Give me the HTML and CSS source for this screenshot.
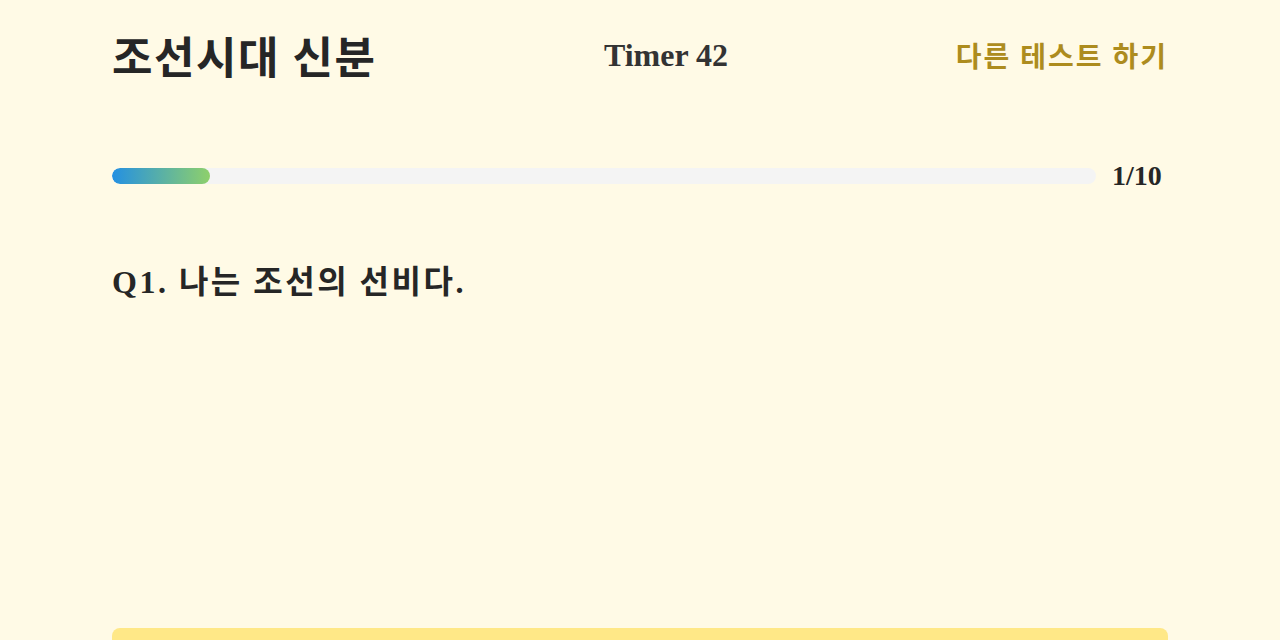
FILE: index.html
```html
<!DOCTYPE html>
<html lang="ko">
<head>
<meta charset="utf-8">
<link rel="stylesheet" href="styles.css">
</head>
<body>
<div class="page">
  <header class="header">
    <h1 class="title">조선시대 신분</h1>
    <div class="timer">Timer 42</div>
    <a class="other" href="#">다른 테스트 하기</a>
  </header>
  <div class="progress-row">
    <div class="track"><div class="fill" style="width:10%"></div></div>
    <div class="count">1/10</div>
  </div>
  <h2 class="question">Q1. 나는 조선의 선비다.</h2>
  <div class="answer"></div>
</div>
</body>
</html>
```
FILE: styles.css
```css
html, body { margin: 0; padding: 0; }
body {
  background: #fffae6;
  font-family: "Liberation Serif", "Noto Sans CJK KR", serif;
  color: #262626;
  overflow: hidden;
}
.page {
  width: 1056px;
  margin: 0 auto;
}
.header {
  height: 110px;
  display: flex;
  justify-content: space-between;
  align-items: center;
}
.title {
  margin: 0;
  font-size: 44px;
  font-weight: 700;
  color: #262626;
  letter-spacing: 1.5px;
}
.timer {
  font-size: 32px;
  font-weight: 700;
  color: #333;
}
.other {
  font-size: 28px;
  font-weight: 700;
  color: #ad8c1e;
  text-decoration: none;
  letter-spacing: 2px;
}
.progress-row {
  margin-top: 50px;
  height: 32px;
  display: flex;
  align-items: center;
  gap: 16px;
}
.track {
  flex: 1;
  height: 16px;
  background: #f4f4f4;
  border-radius: 8px;
  overflow: hidden;
}
.fill {
  height: 100%;
  border-radius: 8px;
  background: linear-gradient(90deg, #2490e2, #8ed06b);
}
.count {
  font-size: 28px;
  font-weight: 700;
  color: #262626;
  width: 56px;
}
.question {
  margin: 66px 0 0;
  font-size: 32px;
  line-height: 48px;
  font-weight: 700;
  color: #262626;
  letter-spacing: 2.5px;
}
.answer {
  margin-top: 322px;
  height: 80px;
  background: #ffe887;
  border-radius: 8px;
}
```
